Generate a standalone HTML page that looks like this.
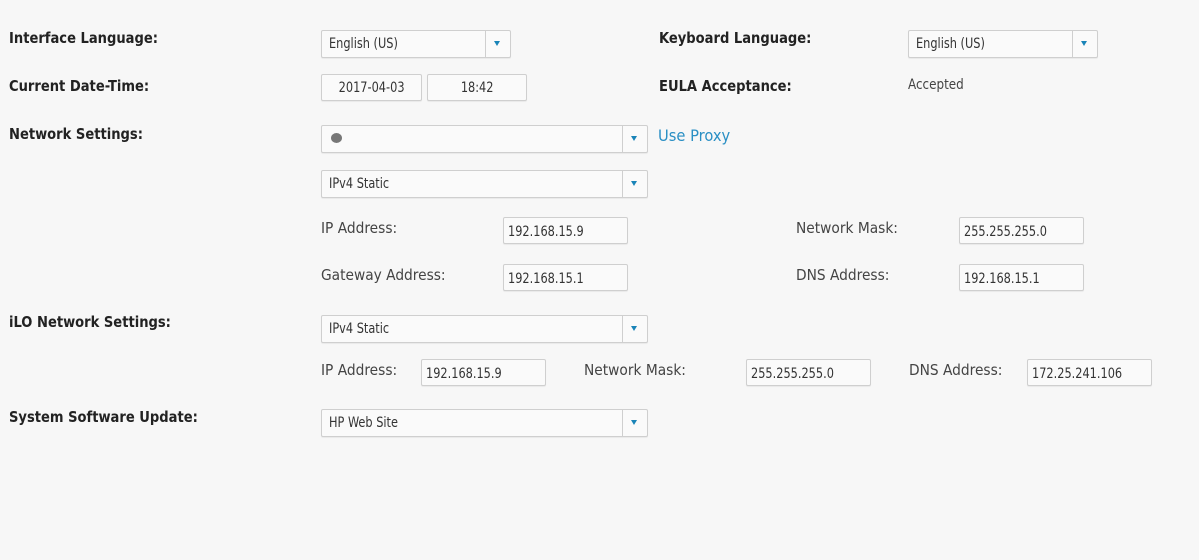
<!DOCTYPE html>
<html><head><style>
body{margin:0;width:1199px;height:560px;background:#f7f7f7;position:relative;overflow:hidden;font-family:"Liberation Sans Narrow","DejaVu Sans Condensed","Liberation Sans",sans-serif;color:#333}
.l{position:absolute;font-weight:bold;font-size:15px;color:#222;font-family:"DejaVu Sans Condensed","Liberation Sans Narrow",sans-serif;transform:scaleX(.97);transform-origin:left}
.t{position:absolute;font-size:15px;color:#444;transform:scaleX(1.02);transform-origin:left}
.b{position:absolute;box-sizing:border-box;border:1px solid #cfcfcf;background:#fafafa;font-size:14px;color:#333;line-height:26px;padding-left:4px;border-radius:2px;box-shadow:0 1px 1px rgba(0,0,0,.06)}
.b span.v{display:inline-block;transform:scaleX(.9);transform-origin:left}
.s .a{position:absolute;right:0;top:0;bottom:0;width:24px;border-left:1px solid #cfcfcf}
.s .a:after{content:"";position:absolute;left:8px;top:10px;border-left:3.5px solid transparent;border-right:3.5px solid transparent;border-top:5px solid #1a84b8}
.c{text-align:center;padding:0}
.c span.v{transform-origin:center}
</style></head><body>
<div class="l" style="left:9px;top:29px">Interface Language:</div>
<div class="l" style="left:9px;top:77px">Current Date-Time:</div>
<div class="l" style="left:9px;top:125px">Network Settings:</div>
<div class="l" style="left:9px;top:313px">iLO Network Settings:</div>
<div class="l" style="left:9px;top:408px">System Software Update:</div>
<div class="l" style="left:659px;top:29px">Keyboard Language:</div>
<div class="l" style="left:659px;top:77px">EULA Acceptance:</div>

<div class="b s" style="left:321px;top:30px;width:190px;height:28px;padding-left:7px;line-height:27px"><span class="v">English (US)</span><div class="a"></div></div>
<div class="b s" style="left:908px;top:30px;width:190px;height:28px;padding-left:7px;line-height:27px"><span class="v">English (US)</span><div class="a"></div></div>
<div class="b c" style="left:321px;top:74px;width:101px;height:27px"><span class="v">2017-04-03</span></div>
<div class="b c" style="left:427px;top:74px;width:100px;height:27px"><span class="v">18:42</span></div>
<div class="t" style="left:908px;top:77px;font-size:14px;transform:scaleX(.95)">Accepted</div>
<div class="b s" style="left:321px;top:125px;width:327px;height:28px;padding-left:9px"><span style="display:inline-block;width:11px;height:10px;border-radius:50%;background:#777;margin-top:7px;vertical-align:top"></span><div class="a"></div></div>
<div class="t" style="left:658px;top:126px;color:#2a8fc4;font-size:16px">Use Proxy</div>
<div class="b s" style="left:321px;top:170px;width:327px;height:28px;padding-left:7px"><span class="v">IPv4 Static</span><div class="a"></div></div>

<div class="t" style="left:321px;top:219px">IP Address:</div>
<div class="b" style="left:503px;top:217px;width:125px;height:27px;line-height:28px"><span class="v">192.168.15.9</span></div>
<div class="t" style="left:796px;top:219px">Network Mask:</div>
<div class="b" style="left:959px;top:217px;width:125px;height:27px;line-height:28px"><span class="v">255.255.255.0</span></div>
<div class="t" style="left:321px;top:266px">Gateway Address:</div>
<div class="b" style="left:503px;top:264px;width:125px;height:27px;line-height:28px"><span class="v">192.168.15.1</span></div>
<div class="t" style="left:796px;top:266px">DNS Address:</div>
<div class="b" style="left:959px;top:264px;width:125px;height:27px;line-height:28px"><span class="v">192.168.15.1</span></div>

<div class="b s" style="left:321px;top:315px;width:327px;height:28px;padding-left:7px"><span class="v">IPv4 Static</span><div class="a"></div></div>
<div class="t" style="left:321px;top:361px">IP Address:</div>
<div class="b" style="left:421px;top:359px;width:125px;height:27px;line-height:28px"><span class="v">192.168.15.9</span></div>
<div class="t" style="left:584px;top:361px">Network Mask:</div>
<div class="b" style="left:746px;top:359px;width:125px;height:27px;line-height:28px"><span class="v">255.255.255.0</span></div>
<div class="t" style="left:909px;top:361px">DNS Address:</div>
<div class="b" style="left:1027px;top:359px;width:125px;height:27px;line-height:28px"><span class="v">172.25.241.106</span></div>

<div class="b s" style="left:321px;top:409px;width:327px;height:28px;padding-left:7px"><span class="v">HP Web Site</span><div class="a"></div></div>
</body></html>
